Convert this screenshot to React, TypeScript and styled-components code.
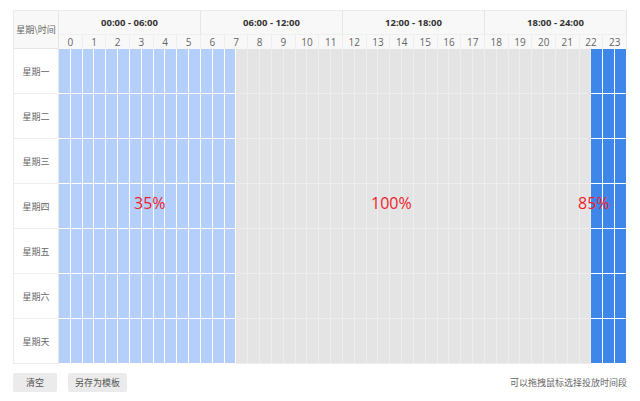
import React from 'react';
import styled, { createGlobalStyle } from 'styled-components';

const GlobalStyle = createGlobalStyle`
	body {
		margin: 0;
		background: #fff;
		font-family: 'Open Sans', 'Noto Sans CJK SC', sans-serif;
	}
`;

type Level = 'low' | 'full' | 'high';

const days = ['星期一', '星期二', '星期三', '星期四', '星期五', '星期六', '星期天'];
const groups = ['00:00 - 06:00', '06:00 - 12:00', '12:00 - 18:00', '18:00 - 24:00'];
const hours = Array.from({ length: 24 }, (_, i) => i);
const halves = Array.from({ length: 48 }, (_, i) => i);

const levelOf = (half: number): Level => {
	if (half < 15) return 'low';
	if (half >= 45) return 'high';
	return 'full';
};

const cellColors: Record<Level, string> = {
	low: '#b4cffa',
	full: '#e4e4e4',
	high: '#3f86ea',
};

const lineColors: Record<Level, string> = {
	low: '#ffffff',
	full: '#ededed',
	high: '#ffffff',
};

const Page = styled.div`
	padding: 10px 13px 0;
	width: 614px;
`;

const Grid = styled.div`
	position: relative;
	display: grid;
	grid-template-columns: 45px repeat(48, 1fr);
	grid-template-rows: 24px 14px repeat(7, 45px);
	border-top: 1px solid #ececec;
	border-left: 1px solid #ececec;
	box-sizing: border-box;
`;

const Corner = styled.div`
	grid-row: span 2;
	display: flex;
	align-items: center;
	justify-content: center;
	background: #f8f8f8;
	border-right: 1px solid #e6e6e6;
	border-bottom: 1px solid #e6e6e6;
	font-family: 'Noto Sans CJK SC', sans-serif;
	font-size: 9px;
	color: #666;
`;

const GroupHead = styled.div`
	grid-column: span 12;
	display: flex;
	align-items: center;
	justify-content: center;
	background: #f8f8f8;
	border-right: 1px solid #e6e6e6;
	border-bottom: 1px solid #efefef;
	font-size: 9.5px;
	font-weight: 700;
	color: #333;
`;

const HourHead = styled.div`
	grid-column: span 2;
	display: flex;
	align-items: center;
	justify-content: center;
	background: #f8f8f8;
	border-right: 1px solid #eeeeee;
	font-size: 10px;
	line-height: 12px;
	color: #666;
`;

const DayLabel = styled.div`
	display: flex;
	align-items: center;
	justify-content: center;
	background: #fff;
	border-bottom: 1px solid #eeeeee;
	border-right: 1px solid #e6e6e6;
	font-family: 'Noto Sans CJK SC', sans-serif;
	font-size: 9px;
	color: #666;
`;

const Cell = styled.div<{ $level: Level }>`
	background: ${(p) => cellColors[p.$level]};
	border-right: 1px solid ${(p) => lineColors[p.$level]};
	border-bottom: 1px solid ${(p) => lineColors[p.$level]};
`;

const Percent = styled.span<{ $left: number }>`
	position: absolute;
	top: 184px;
	left: ${(p) => p.$left}px;
	font-size: 16px;
	line-height: 16px;
	color: #ee1d2a;
	pointer-events: none;
`;

const Footer = styled.div`
	display: flex;
	align-items: center;
	gap: 11px;
	margin-top: 9px;
`;

const Button = styled.button<{ $width: number }>`
	width: ${(p) => p.$width}px;
	height: 19px;
	padding: 0;
	border: none;
	border-radius: 2px;
	background: #ebebeb;
	color: #555;
	font-family: 'Noto Sans CJK SC', sans-serif;
	font-size: 9px;
`;

const Hint = styled.span`
	margin-left: auto;
	font-family: 'Noto Sans CJK SC', sans-serif;
	font-size: 9px;
	color: #666;
`;

export default function App() {
	return (
		<Page>
			<GlobalStyle />
			<Grid>
				<Corner>星期\时间</Corner>
				{groups.map((g) => (
					<GroupHead key={g}>{g}</GroupHead>
				))}
				{hours.map((h) => (
					<HourHead key={h}>{h}</HourHead>
				))}
				{days.map((d) => (
					<React.Fragment key={d}>
						<DayLabel>{d}</DayLabel>
						{halves.map((i) => (
							<Cell key={i} $level={levelOf(i)} />
						))}
					</React.Fragment>
				))}
				<Percent $left={120}>35%</Percent>
				<Percent $left={357}>100%</Percent>
				<Percent $left={564}>85%</Percent>
			</Grid>
			<Footer>
				<Button $width={44}>清空</Button>
				<Button $width={59}>另存为模板</Button>
				<Hint>可以拖拽鼠标选择投放时间段</Hint>
			</Footer>
		</Page>
	);
}
